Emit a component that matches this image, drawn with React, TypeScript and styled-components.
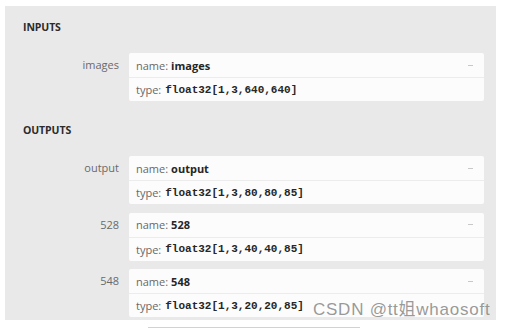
import React from "react";
import { createGlobalStyle, styled } from "styled-components";

const GlobalStyle = createGlobalStyle`
  html, body {
    margin: 0;
    padding: 0;
    background: #ffffff;
  }
  body {
    font-family: "Open Sans", "Noto Sans", sans-serif;
    width: 506px;
    height: 331px;
    overflow: hidden;
  }
`;

type Arg = { label: string; name: string; type: string };

const inputs: Arg[] = [{ label: "images", name: "images", type: "float32[1,3,640,640]" }];

const outputs: Arg[] = [
  { label: "output", name: "output", type: "float32[1,3,80,80,85]" },
  { label: "528", name: "528", type: "float32[1,3,40,40,85]" },
  { label: "548", name: "548", type: "float32[1,3,20,20,85]" },
];

const Page = styled.div`
  position: relative;
  padding: 6px 0 0 5px;
  width: 506px;
  height: 331px;
  box-sizing: border-box;
`;

const Panel = styled.div`
  width: 491px;
  height: 314px;
  background: #e9e9e9;
  box-sizing: border-box;
  padding: 13px 12px 0 0;
`;

const Header = styled.div<{ $first?: boolean }>`
  padding-left: 18px;
  margin-top: ${(p) => (p.$first ? "0" : "21px")};
  margin-bottom: 18px;
  font-size: 10.5px;
  line-height: 16px;
  font-weight: 700;
  color: #2b2b2b;
  letter-spacing: -0.1px;
`;

const List = styled.div`
  display: flex;
  flex-direction: column;
  gap: 8.5px;
`;

const Row = styled.div`
  display: grid;
  grid-template-columns: 114px 1fr;
  column-gap: 10px;
  align-items: start;
`;

const Label = styled.div`
  text-align: right;
  font-size: 11px;
  line-height: 24px;
  color: #6a6a6a;
`;

const Box = styled.div`
  background: #fcfcfc;
  border-radius: 2px;
  display: flex;
  flex-direction: column;
`;

const Line = styled.div<{ $border?: boolean }>`
  display: flex;
  align-items: center;
  height: ${(p) => (p.$border ? "23px" : "24px")};
  padding: 0 7px;
  font-size: 11px;
  color: #686868;
  border-top: ${(p) => (p.$border ? "1px solid #ececec" : "none")};
`;

const Value = styled.b`
  margin-left: 3px;
  color: #262626;
  font-weight: 700;
`;

const Mono = styled.b`
  margin-left: 4px;
  font-family: "Liberation Mono", "DejaVu Sans Mono", monospace;
  font-size: 11px;
  font-weight: 700;
  color: #262626;
`;

const Expander = styled.span`
  margin-left: auto;
  margin-right: 4px;
  width: 5px;
  height: 1px;
  background: #c8c8c8;
`;

const Bottom = styled.div`
  margin: 7px 0 0 143px;
  width: 212px;
  border-top: 1px solid #d2d2d2;
`;

const Watermark = styled.div`
  position: absolute;
  left: 313px;
  top: 299px;
  font-family: "Liberation Sans", "Noto Sans CJK SC", sans-serif;
  font-size: 17px;
  line-height: 22px;
  color: rgba(135, 135, 135, 0.85);
  letter-spacing: 0.75px;
  white-space: nowrap;
`;

const ArgRow: React.FC<{ arg: Arg }> = ({ arg }) => (
  <Row>
    <Label>{arg.label}</Label>
    <Box>
      <Line>
        name:<Value>{arg.name}</Value>
        <Expander />
      </Line>
      <Line $border>
        type:<Mono>{arg.type}</Mono>
      </Line>
    </Box>
  </Row>
);

export default function App() {
  return (
    <Page>
      <GlobalStyle />
      <Panel>
        <Header $first>INPUTS</Header>
        <List>
          {inputs.map((a) => (
            <ArgRow key={a.label} arg={a} />
          ))}
        </List>
        <Header>OUTPUTS</Header>
        <List>
          {outputs.map((a) => (
            <ArgRow key={a.label} arg={a} />
          ))}
        </List>
      </Panel>
      <Bottom />
      <Watermark>CSDN @tt姐whaosoft</Watermark>
    </Page>
  );
}
